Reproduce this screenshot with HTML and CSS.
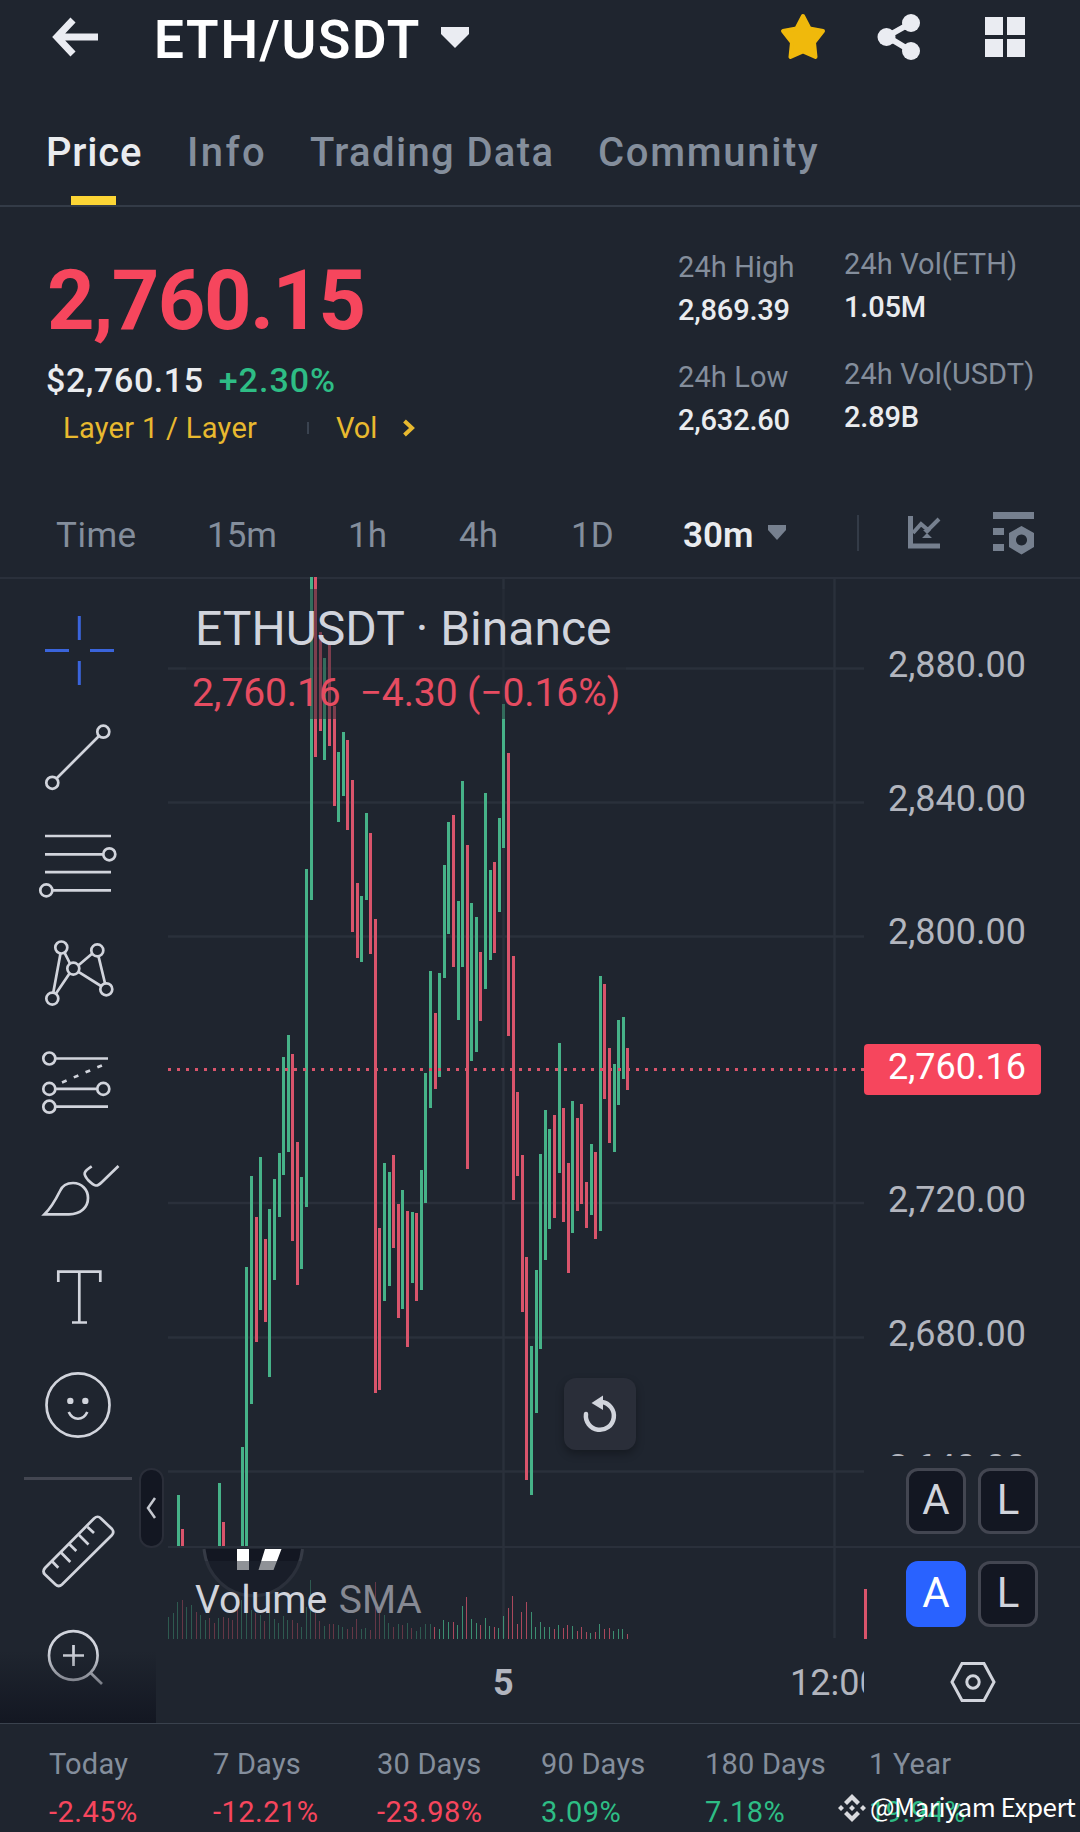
FILE: index.html
```html
<!DOCTYPE html>
<html lang="en">
  <head>
    <meta charset="UTF-8" />
    <title>ETH/USDT</title>
    <link rel="stylesheet" href="styles.css">
  </head>
  <body>
    <header class="header">
      <svg class="back" width="46" height="40" viewBox="0 0 46 40">
        <path d="M21 3 L5 20 L21 37 M5 20 H46" />
      </svg>
      <h1 class="pair">ETH/USDT</h1>
      <svg class="pair-arrow" width="28" height="21" viewBox="0 0 28 21">
        <path d="M0 0 H28 V7 L14 21 L0 7 Z" />
      </svg>
      <div class="header-actions">
        <svg class="star" width="46" height="48" viewBox="0 0 46 48">
          <path d="M23 3 L29.5 15.5 L43 18 L34 29.5 L35.5 44 L23 38.500 L10.500 44 L12 29.500 L3 18 L16.500 15.500 Z" />
        </svg>
        <svg class="share" width="44" height="48" viewBox="0 0 44 48">
          <path d="M34 10 L10 23.500 L34 38" />
          <circle cx="34" cy="10" r="9" />
          <circle cx="9.500" cy="24" r="9" />
          <circle cx="34" cy="38" r="9" />
        </svg>
        <div class="grid-icon"><i></i><i></i><i></i><i></i></div>
      </div>
    </header>

    <nav class="tabs">
      <span class="tab active">Price</span>
      <span class="tab tab-info">Info</span>
      <span class="tab tab-trading">Trading Data</span>
      <span class="tab tab-community">Community</span>
    </nav>

    <section class="quote">
      <div class="quote-main">
        <div class="last-price">2,760.15</div>
        <div class="fiat"><span class="fiat-value">$2,760.15</span><span class="fiat-change">+2.30%</span></div>
        <div class="tags">
          <span class="tag-layer">Layer 1 / Layer</span>
          <i class="tag-divider"></i>
          <span class="tag-vol">Vol</span>
          <svg width="14" height="18" viewBox="0 0 14 18"><path d="M2.500 2 L10 9 L2.500 16" /></svg>
        </div>
      </div>
      <div class="stats stats-left">
        <div class="stat"><label>24h High</label><b>2,869.39</b></div>
        <div class="stat"><label>24h Low</label><b>2,632.60</b></div>
      </div>
      <div class="stats stats-right">
        <div class="stat"><label>24h Vol(ETH)</label><b>1.05M</b></div>
        <div class="stat"><label>24h Vol(USDT)</label><b>2.89B</b></div>
      </div>
    </section>

    <div class="intervals">
      <span class="iv iv-time">Time</span>
      <span class="iv iv-15m">15m</span>
      <span class="iv iv-1h">1h</span>
      <span class="iv iv-4h">4h</span>
      <span class="iv iv-1d">1D</span>
      <span class="iv iv-30m">30m</span>
      <svg class="iv-arrow" width="18" height="15" viewBox="0 0 18 15"><path d="M0 0 H18 V5 L9 15 L0 5 Z" /></svg>
      <i class="iv-divider"></i>
      <svg class="iv-chart" width="33" height="33" viewBox="0 0 33 33">
        <path class="stroke" d="M2.500 0 V30 H32" />
        <path class="stroke thin" d="M5 17 L13 8 L20 14 L31 3" />
        <path d="M14 22 L19 17 L24 22 Z M15 14 H23 L19 18 Z" />
      </svg>
      <svg class="iv-settings" width="42" height="43" viewBox="0 0 42 43">
        <path d="M0 0 H41 V7 H0 Z M0 16 H11 V23 H0 Z M0 32 H11 V39 H0 Z" />
        <path fill-rule="evenodd" d="M28.500 14 L41 21 V35 L28.500 42.500 L16 35 V21 Z M28.500 22.500 a5.500 5.500 0 1 0 .01 0 Z" />
      </svg>
    </div>

    <main class="chart">
      <aside class="tools">
        <div class="tool"><svg class="blue" viewBox="0 0 84 84"><path d="M42.300 8 V32 M42.300 53 V77 M8 42.500 H32 M53 42.500 H77" /></svg></div>
        <div class="tool">
          <svg viewBox="0 0 84 84">
            <path d="M19.500 62.500 L62 20" />
            <circle cx="66.300" cy="15.700" r="6" /><circle cx="15.300" cy="66.800" r="6" />
          </svg>
        </div>
        <div class="tool">
          <svg viewBox="0 0 84 84">
            <path d="M8 13 H74 M8 31.300 H66 M8 49.200 H74 M16 67.400 H74" />
            <circle cx="72.300" cy="31.300" r="6" /><circle cx="9.300" cy="67.400" r="6" />
          </svg>
        </div>
        <div class="tool">
          <svg viewBox="0 0 84 84">
            <path d="M16.300 61.500 L23.500 22.500 M27.500 21.700 L33 32.500 M19 62.500 L32.500 42.400 M41.500 34.200 L55 22.700 M61.500 25.400 L68 52.300 M41.500 40.800 L64 55" />
            <circle cx="24.300" cy="16.500" r="6" /><circle cx="60.300" cy="19.400" r="6" /><circle cx="36.300" cy="37.600" r="6" />
            <circle cx="15.300" cy="67.600" r="6" /><circle cx="69.300" cy="58.300" r="6" />
          </svg>
        </div>
        <div class="tool">
          <svg viewBox="0 0 84 84">
            <path d="M19 19.500 H71 M19 49.900 H60 M19 67.700 H71" />
            <path stroke-dasharray="5 7.800" d="M25 43.400 L67 25.500" />
            <circle cx="12.300" cy="19.500" r="6" /><circle cx="12.300" cy="49.900" r="6" />
            <circle cx="66.300" cy="49.900" r="6" /><circle cx="12.300" cy="67.700" r="6" />
          </svg>
        </div>
        <div class="tool">
          <svg viewBox="0 0 84 84">
            <path d="M7.500 68.300 C15 61 19 53 23 45 C26 38 31 37 36 37 C45 37 51 44 51 52 C51 61 44 68.300 32 68.300 Z" />
            <path d="M54.700 20.400 C46 26 46 28 51 34 C58 41 60 41 65 36 L81.500 20" />
          </svg>
        </div>
        <div class="tool"><svg viewBox="0 0 84 84"><path d="M21.300 28 V17.600 H63.300 V28 M42.300 17.600 V68.500 M35 68.500 H50" /></svg></div>
        <div class="tool">
          <svg viewBox="0 0 84 84">
            <ellipse cx="41" cy="43" rx="31.500" ry="31.700" />
            <path d="M31.700 50 C36 59 46 59 50.300 50" />
            <circle class="dot" cx="33.300" cy="38.900" r="3.200" /><circle class="dot" cx="48.300" cy="38.900" r="3.200" />
          </svg>
        </div>
        <hr class="tools-divider">
        <div class="tool">
          <svg viewBox="0 0 84 84">
            <path d="M57 8.500 Q60.700 5 64 8.500 L75 19 Q77.500 22 75 25 L25 74.500 Q21.700 77.500 18.500 74.500 L8 64.500 Q5 61.500 8 58 Z" />
            <path d="M15.300 51.500 L21.300 57.800 M24 42.500 L33.300 52 M32.700 34.500 L39.300 41 M42 25 L51.500 34.500 M50.500 17 L57 23" />
          </svg>
        </div>
        <div class="tool tool-zoom">
          <svg viewBox="0 0 84 84">
            <circle cx="36.300" cy="39.500" r="24.300" />
            <path d="M26 39.500 H47 M36.500 29 V50 M53.500 56.700 L65 68" />
          </svg>
        </div>
        <div class="tools-fade"></div>
      </aside>

      <div class="collapse"><svg width="12" height="24" viewBox="0 0 12 24"><path d="M9 2 L2 12 L9 22" /></svg></div>

      <!-- plot units are page pixels: x from 168, y from 578 -->
      <svg class="plot" width="700" height="1144" viewBox="168 579 700 1144">
        <path class="gridline" d="M168 668.500 H864 M168 802.500 H864 M168 936.500 H864 M168 1203 H864 M168 1337.500 H864 M168 1471.500 H864 M503.500 579 V1638 M834.500 579 V1638" />
        <path id="up" class="bars up" />
        <path id="down" class="bars down" />
        <path class="price-line" d="M168 1069.500 H864" />
        <g class="logo">
          <path class="logo-ring" d="M204 1549 A49.500 51 0 0 0 302.500 1549 Z" />
          <path class="logo-edge" d="M204 1549 A49.500 52 0 0 0 302.500 1549" />
          <path class="logo-mark" d="M237 1549 H249 V1570 H237 Z M265 1549 H281.500 L273.500 1570 H258.500 Z" />
        </g>
        <path id="vol-up" class="volume up" />
        <path id="vol-down" class="volume down" />
        <path class="last-volume down" d="M865.500 1589 V1639" />
      </svg>

      <div class="legend">
        <div class="legend-title">ETHUSDT · Binance</div>
        <div class="legend-price"><span>2,760.16</span><span>−4.30 (−0.16%)</span></div>
      </div>
      <div class="volume-legend">Volume <span>SMA</span></div>

      <div class="reload">
        <svg width="36" height="36" viewBox="0 0 36 36">
          <path class="arc" d="M4 18 A14 14 0 1 0 20 6" />
          <path class="head" d="M9.500 7 L21 -0.500 V14 Z" />
        </svg>
      </div>

      <div class="axis">
        <div class="axis-label">2,880.00</div>
        <div class="axis-label">2,840.00</div>
        <div class="axis-label">2,800.00</div>
        <div class="axis-label"><span class="axis-tag">2,760.16</span></div>
        <div class="axis-label">2,720.00</div>
        <div class="axis-label">2,680.00</div>
        <div class="axis-label">2,640.00</div>
      </div>

      <div class="scale-buttons scale-price"><button>A</button><button>L</button></div>
      <div class="pane-divider"></div>
      <div class="scale-buttons scale-volume"><button class="on">A</button><button>L</button></div>

      <div class="time-label time-day">5</div>
      <div class="time-label time-noon">12:00</div>
      <svg class="axis-settings" width="46" height="42" viewBox="0 0 46 42">
        <path d="M12 2.500 H34 L44 21 L34 39.500 H12 L2 21 Z" />
        <circle cx="23" cy="21" r="6.200" />
      </svg>
    </main>

    <footer class="performance">
      <div class="perf down"><label>Today</label><span>-2.45%</span></div>
      <div class="perf down"><label>7 Days</label><span>-12.21%</span></div>
      <div class="perf down"><label>30 Days</label><span>-23.98%</span></div>
      <div class="perf up"><label>90 Days</label><span>3.09%</span></div>
      <div class="perf up"><label>180 Days</label><span>7.18%</span></div>
      <div class="perf up"><label>1 Year</label><span>19.94%</span></div>
      <div class="watermark">
        <svg width="28" height="28" viewBox="0 0 28 28">
          <path d="M14 0 L22 8 L19 11 L14 6 L9 11 L6 8 Z M14 28 L22 20 L19 17 L14 22 L9 17 L6 20 Z M14 11 L17 14 L14 17 L11 14 Z M3 11 L6 14 L3 17 L0 14 Z M25 11 L28 14 L25 17 L22 14 Z" />
        </svg>
        <span>@Mariyam Expert</span>
      </div>
    </footer>

    <script>
      // [x, high, low] of every bar, split by direction
      const up = [
        [177, 1495, 1546], [218, 1483, 1546], [241, 1447, 1546], [245, 1267, 1546],
        [250, 1176, 1404], [259, 1157, 1310], [268, 1209, 1377], [273, 1179, 1280],
        [278, 1153, 1217], [282, 1057, 1175], [287, 1035, 1152], [300, 1177, 1269],
        [305, 869, 1207], [310, 577, 900], [323, 658, 760], [337, 752, 822],
        [342, 732, 796], [360, 896, 962], [365, 813, 900], [383, 1163, 1301],
        [388, 1172, 1286], [401, 1190, 1309], [411, 1212, 1283], [420, 1170, 1290],
        [424, 1073, 1203], [429, 971, 1108], [438, 973, 1077], [443, 865, 978],
        [447, 822, 934], [457, 901, 1020], [461, 781, 967], [470, 903, 1061],
        [475, 917, 1052], [484, 793, 989], [489, 870, 960], [498, 818, 912],
        [502, 704, 848], [530, 1346, 1495], [535, 1270, 1413], [539, 1154, 1349],
        [544, 1110, 1260], [548, 1129, 1229], [558, 1043, 1173], [571, 1101, 1233],
        [590, 1144, 1215], [599, 976, 1231], [613, 1064, 1152], [617, 1020, 1105],
        [622, 1017, 1079],
      ];
      const down = [
        [181, 1529, 1546], [222, 1522, 1546], [255, 1217, 1342], [264, 1239, 1322],
        [291, 1054, 1241], [296, 1142, 1285], [314, 577, 757], [319, 632, 731],
        [328, 644, 746], [333, 706, 806], [346, 740, 830], [351, 780, 932],
        [356, 883, 958], [369, 833, 954], [374, 919, 1393], [378, 1228, 1390],
        [392, 1155, 1248], [397, 1204, 1318], [406, 1211, 1347], [415, 1213, 1301],
        [434, 1013, 1089], [452, 815, 967], [466, 845, 1169], [479, 952, 1021],
        [493, 862, 953], [507, 753, 1036], [512, 956, 1200], [516, 1092, 1176],
        [521, 1155, 1312], [525, 1257, 1480], [553, 1115, 1218], [562, 1108, 1222],
        [567, 1163, 1273], [576, 1118, 1211], [580, 1104, 1204], [585, 1182, 1228],
        [594, 1152, 1239], [603, 984, 1099], [608, 1048, 1143], [626, 1048, 1090],
      ];
      const barPath = (bars) =>
        bars.map(([x, high, low]) => `M${x + 1.5} ${high}V${low}`).join("");
      document.getElementById("up").setAttribute("d", barPath(up));
      document.getElementById("down").setAttribute("d", barPath(down));

      // volume heights, u = up bar, d = down bar
      const volume =
        "u22 u26 u37 d39 u32 u34 d27 u24 u19 d21 d16 u21 d22 d21 d19 d32 u39 u42 u29 d26 " +
        "u24 d18 u26 u20 u16 u23 u19 d19 d16 u12 u32 u59 d26 d18 u13 d15 d15 u14 u12 d10 " +
        "d12 d20 u10 u11 d9 d57 d27 u24 u16 d12 u15 d14 u16 d11 u8 u12 u15 u15 d12 u10 " +
        "u19 u17 d17 u14 u33 d42 u20 u16 d14 u21 u13 d12 u11 u23 d31 d43 d15 d27 d37 u27 " +
        "u12 u17 u12 u12 d10 u14 d11 d14 u13 d8 d12 d7 u6 d7 u15 d10 d11 u8 u10 u10 d5";
      const paths = { u: "", d: "" };
      volume.split(" ").forEach((item, i) => {
        const x = Math.round(168 + i * 4.59) + 0.5;
        paths[item[0]] += `M${x} 1639v-${item.slice(1)}`;
      });
      document.getElementById("vol-up").setAttribute("d", paths.u);
      document.getElementById("vol-down").setAttribute("d", paths.d);
    </script>
  </body>
</html>
```
FILE: styles.css
```css
body {
  margin: 0;
  width: 1080px;
  height: 1832px;
  overflow: hidden;
  background: #1f252f;
  color: #eaecef;
  font-family: Roboto, "Liberation Sans", sans-serif;
}

svg {
  display: block;
  overflow: visible;
}

/* header */
.header {
  display: flex;
  align-items: center;
  box-sizing: border-box;
  height: 74px;
  padding: 0 55px 0 52px;
}

.back path {
  fill: none;
  stroke: #eaecf2;
  stroke-width: 7;
}

.pair {
  margin: 6px 0 0 56px;
  width: 264px;
  color: #fff;
  font-size: 53px;
  line-height: 60px;
  font-weight: 600;
  letter-spacing: 1.7px;
  white-space: nowrap;
}

.pair-arrow {
  margin-left: 23px;
  fill: #eaecf2;
}

.header-actions {
  display: flex;
  align-items: center;
  margin-left: auto;
}

.star {
  fill: #f0b90b;
  stroke: #f0b90b;
  stroke-width: 4;
  stroke-linejoin: round;
}

.share {
  margin: 0 64px 0 51px;
  fill: #eaecf2;
}

.share path {
  fill: none;
  stroke: #eaecf2;
  stroke-width: 6;
}

.grid-icon {
  display: grid;
  grid-template-columns: 18px 18px;
  grid-auto-rows: 18px;
  gap: 4px;
}

.grid-icon i {
  background: #eaecf2;
}

/* tabs */
.tabs {
  display: flex;
  box-sizing: border-box;
  height: 133px;
  padding: 55px 0 0 46px;
  border-bottom: 2px solid #333b47;
}

.tab {
  position: relative;
  color: #848e9c;
  font-size: 40px;
  line-height: 48px;
  font-weight: 500;
  white-space: nowrap;
}

.tab.active {
  width: 95px;
  color: #eaecef;
  letter-spacing: 0.8px;
}

.tab.active::after {
  content: "";
  position: absolute;
  left: 25px;
  top: 67px;
  width: 45px;
  height: 9px;
  background: #fcd535;
}

.tab-info {
  margin-left: 46px;
  width: 79px;
  letter-spacing: 2.4px;
}

.tab-trading {
  margin-left: 44px;
  width: 244px;
  letter-spacing: 1.35px;
}

.tab-community {
  margin-left: 44px;
  letter-spacing: 1.7px;
}

/* quote */
.quote {
  display: flex;
  height: 272px;
}

.quote-main {
  width: 678px;
}

.last-price {
  margin: 44px 0 0 47px;
  color: #f6465d;
  font-size: 83px;
  line-height: 100px;
  font-weight: 700;
  letter-spacing: -1.6px;
}

.fiat {
  margin: -1px 0 0 46px;
  font-size: 34px;
  line-height: 60px;
  font-weight: 500;
  letter-spacing: 0.6px;
}

.fiat-change {
  margin-left: 15px;
  color: #2ebd85;
  letter-spacing: 1px;
}

.tags {
  display: flex;
  align-items: center;
  height: 36px;
  margin-left: 63px;
  color: #e8b92f;
  font-size: 29px;
}

.tag-layer {
  width: 244px;
  letter-spacing: 0.3px;
}

.tag-divider {
  width: 2px;
  height: 12px;
  background: #3a4350;
}

.tag-vol {
  margin-left: 27px;
  width: 66px;
}

.tags path {
  fill: none;
  stroke: #e8b92f;
  stroke-width: 4;
}

.stats-left {
  padding-top: 39px;
  width: 166px;
}

.stats-right {
  padding-top: 36px;
}

.stat {
  height: 110px;
}

.stat label,
.stat b {
  display: block;
  font-size: 29px;
  line-height: 43px;
  white-space: nowrap;
}

.stat label {
  color: #848e9c;
  letter-spacing: 0.1px;
}

.stat b {
  font-weight: 500;
  letter-spacing: -0.2px;
}

/* intervals */
.intervals {
  display: flex;
  align-items: center;
  box-sizing: border-box;
  height: 98px;
  padding: 14px 0 0 56px;
}

.iv {
  margin-top: 2px;
  color: #848e9c;
  font-size: 35px;
  line-height: 42px;
}

.iv-time {
  width: 151px;
  letter-spacing: 0.5px;
}

.iv-15m { width: 141px; }
.iv-1h { width: 111px; }
.iv-4h { width: 112px; }
.iv-1d { width: 112px; }

.iv-30m {
  width: 85px;
  color: #eaecef;
  font-weight: 600;
}

.iv-arrow,
.iv-settings,
.iv-chart {
  fill: #76808f;
}

.iv-arrow {
  margin-top: -6px;
}

.iv-divider {
  margin: -4px 49px 0 71px;
  width: 2px;
  height: 36px;
  background: #333b47;
}

.iv-chart {
  margin-top: -6px;
}

.iv-chart .stroke {
  fill: none;
  stroke: #76808f;
  stroke-width: 5;
}

.iv-chart .thin {
  stroke-width: 4;
}

.iv-settings {
  margin: -3px 0 0 52px;
}

/* chart */
.chart {
  position: relative;
  display: flex;
  box-sizing: border-box;
  height: 1146px;
  border-top: 2px solid #2a303b;
}

.tools {
  position: relative;
  box-sizing: border-box;
  width: 156px;
  padding-top: 17px;
}

.tool {
  display: flex;
  align-items: center;
  height: 107.7px;
  padding-left: 37px;
}

.tool svg {
  width: 84px;
  height: 84px;
  fill: none;
  stroke: #d1d4dc;
  stroke-width: 2.7;
}

.tool svg.blue {
  stroke: #3a64db;
  stroke-width: 3;
}

.tool .dot {
  fill: #d1d4dc;
  stroke: none;
}

.tool-zoom {
  margin-top: -2px;
}

.tools-divider {
  margin: 19px 0 19px 24px;
  width: 108px;
  height: 3px;
  border: none;
  background: #434651;
}

.tools-fade {
  position: absolute;
  left: 0;
  bottom: 0;
  width: 156px;
  height: 72px;
  background: linear-gradient(rgba(19, 23, 34, 0), #131722);
}

.collapse {
  position: absolute;
  left: 139px;
  top: 889px;
  display: flex;
  align-items: center;
  justify-content: center;
  box-sizing: border-box;
  width: 25px;
  height: 80px;
  border: 2px solid #2a2e39;
  border-radius: 12px;
  background: #131722;
}

.collapse path {
  fill: none;
  stroke: #c5c8d0;
  stroke-width: 2.5;
}

.plot {
  margin-left: 12px;
}

.gridline {
  fill: none;
  stroke: #2a303b;
  stroke-width: 2.5;
}

.bars {
  stroke-width: 3;
}

.volume {
  stroke-width: 1;
  opacity: 0.75;
}

.plot .up {
  stroke: #46b288;
}

.plot .down {
  stroke: #d9546b;
}

.plot .last-volume {
  stroke-width: 3;
}

.price-line {
  stroke: #d9546b;
  stroke-width: 3;
  stroke-dasharray: 3 6;
}

.logo-ring {
  fill: #131722;
}

.logo-edge {
  fill: none;
  stroke: #363b46;
  stroke-width: 3;
}

.logo-mark {
  fill: #fff;
}

/* legends dim the bars behind them */
.legend,
.volume-legend {
  position: absolute;
  box-sizing: border-box;
  background: rgba(31, 37, 47, 0.5);
  white-space: nowrap;
}

.legend {
  left: 186px;
  top: 10px;
  width: 440px;
  height: 130px;
}

.legend-title {
  margin-left: 9px;
  padding-top: 10px;
  color: #d1d4dc;
  font-size: 48px;
  line-height: 60px;
}

.legend-price {
  display: flex;
  gap: 19px;
  margin-left: 6px;
  color: #e64c61;
  font-size: 39px;
  line-height: 68px;
  letter-spacing: -0.1px;
}

.volume-legend {
  left: 168px;
  top: 982px;
  width: 266px;
  height: 78px;
  padding-left: 27px;
  color: #d1d4dc;
  font-size: 39px;
  line-height: 78px;
}

.volume-legend span {
  margin-left: 2px;
  color: #868993;
}

.reload {
  position: absolute;
  left: 564px;
  top: 799px;
  display: flex;
  align-items: center;
  justify-content: center;
  width: 72px;
  height: 72px;
  border-radius: 12px;
  background: #2a2e39;
  box-shadow: 0 4px 8px rgba(0, 0, 0, 0.3);
}

.reload .arc {
  fill: none;
  stroke: #d1d4dc;
  stroke-width: 4.5;
  stroke-linecap: round;
}

.reload .head {
  fill: #d1d4dc;
}

.axis {
  box-sizing: border-box;
  width: 212px;
  height: 877px;
  margin-left: -4px;
  padding-top: 19px;
  overflow: hidden;
  color: #b2b5be;
  font-size: 36px;
}

.axis-label {
  display: flex;
  align-items: center;
  height: 133.8px;
  padding-left: 24px;
}

.axis-tag {
  margin: 7px 0 0 -24px;
  padding-left: 24px;
  width: 153px;
  height: 51px;
  border-radius: 4px;
  background: #f6465d;
  color: #fff;
  line-height: 46px;
}

.scale-buttons {
  position: absolute;
  left: 906px;
  display: flex;
  gap: 12px;
}

.scale-price {
  top: 889px;
}

.scale-volume {
  top: 982px;
}

.scale-buttons button {
  box-sizing: border-box;
  width: 60px;
  height: 66px;
  padding: 0 0 3px;
  border: 3px solid #434651;
  border-radius: 12px;
  background: #131722;
  color: #d1d4dc;
  font-family: inherit;
  font-size: 42px;
}

.scale-buttons .on {
  border-color: #2962ff;
  background: #2962ff;
  color: #fff;
}

.pane-divider {
  position: absolute;
  left: 168px;
  right: 0;
  top: 967px;
  height: 2px;
  background: #2a303b;
}

.time-label {
  position: absolute;
  top: 1082px;
  color: #b2b5be;
  font-size: 36px;
  line-height: 44px;
}

.time-day {
  left: 493px;
  font-weight: 700;
}

.time-noon {
  left: 790px;
  width: 74px;
  overflow: hidden;
}

.axis-settings {
  position: absolute;
  left: 950px;
  top: 1082px;
  fill: none;
  stroke: #d1d4dc;
  stroke-width: 3;
}

/* performance */
.performance {
  position: relative;
  display: flex;
  box-sizing: border-box;
  height: 109px;
  padding: 16px 0 0 49px;
  border-top: 1px solid #3a424e;
  font-size: 29px;
}

.perf {
  width: 164px;
  flex: none;
}

.perf label,
.perf span {
  display: block;
  line-height: 48px;
}

.perf label {
  color: #848e9c;
  letter-spacing: 0.2px;
}

.perf span {
  letter-spacing: 0.5px;
}

.perf.up {
  color: #2ebd85;
}

.perf.down {
  color: #f6465d;
}

.watermark {
  position: absolute;
  left: 838px;
  top: 64px;
  display: flex;
  align-items: center;
  gap: 4px;
  height: 40px;
  color: #fff;
  font-family: "Noto Sans CJK SC", "Noto Sans", sans-serif;
  font-size: 26px;
  letter-spacing: -0.5px;
  white-space: nowrap;
}

.watermark span {
  margin-top: -5px;
}

.watermark svg {
  fill: #d9dade;
}
```
